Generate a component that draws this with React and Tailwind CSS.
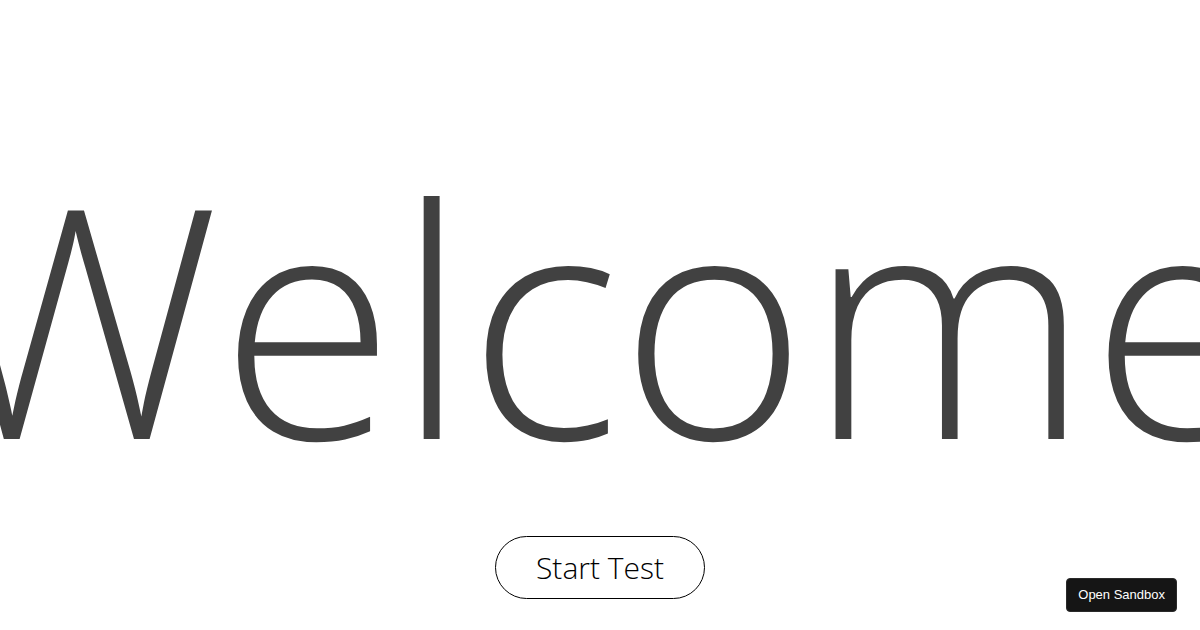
export default function App() {
  return (
    <div className="min-h-screen overflow-hidden bg-white font-['Open_Sans',sans-serif]">
      <main className="flex min-h-screen flex-col items-center pt-24">
        <h1 className="text-[320px] leading-[438px] font-light text-[#414141]">
          Welcome
        </h1>
        <button
          type="button"
          className="mt-0.5 rounded-full border border-black px-10 py-2 text-[30px] font-light text-black"
        >
          Start Test
        </button>
      </main>
      <a
        href="#sandbox"
        className="fixed right-[23px] bottom-[18px] rounded border border-[#2a2a2a] bg-[#151515] px-[11px] py-2 font-['Liberation_Sans',sans-serif] text-[13px] leading-4 text-white"
      >
        Open Sandbox
      </a>
    </div>
  );
}
